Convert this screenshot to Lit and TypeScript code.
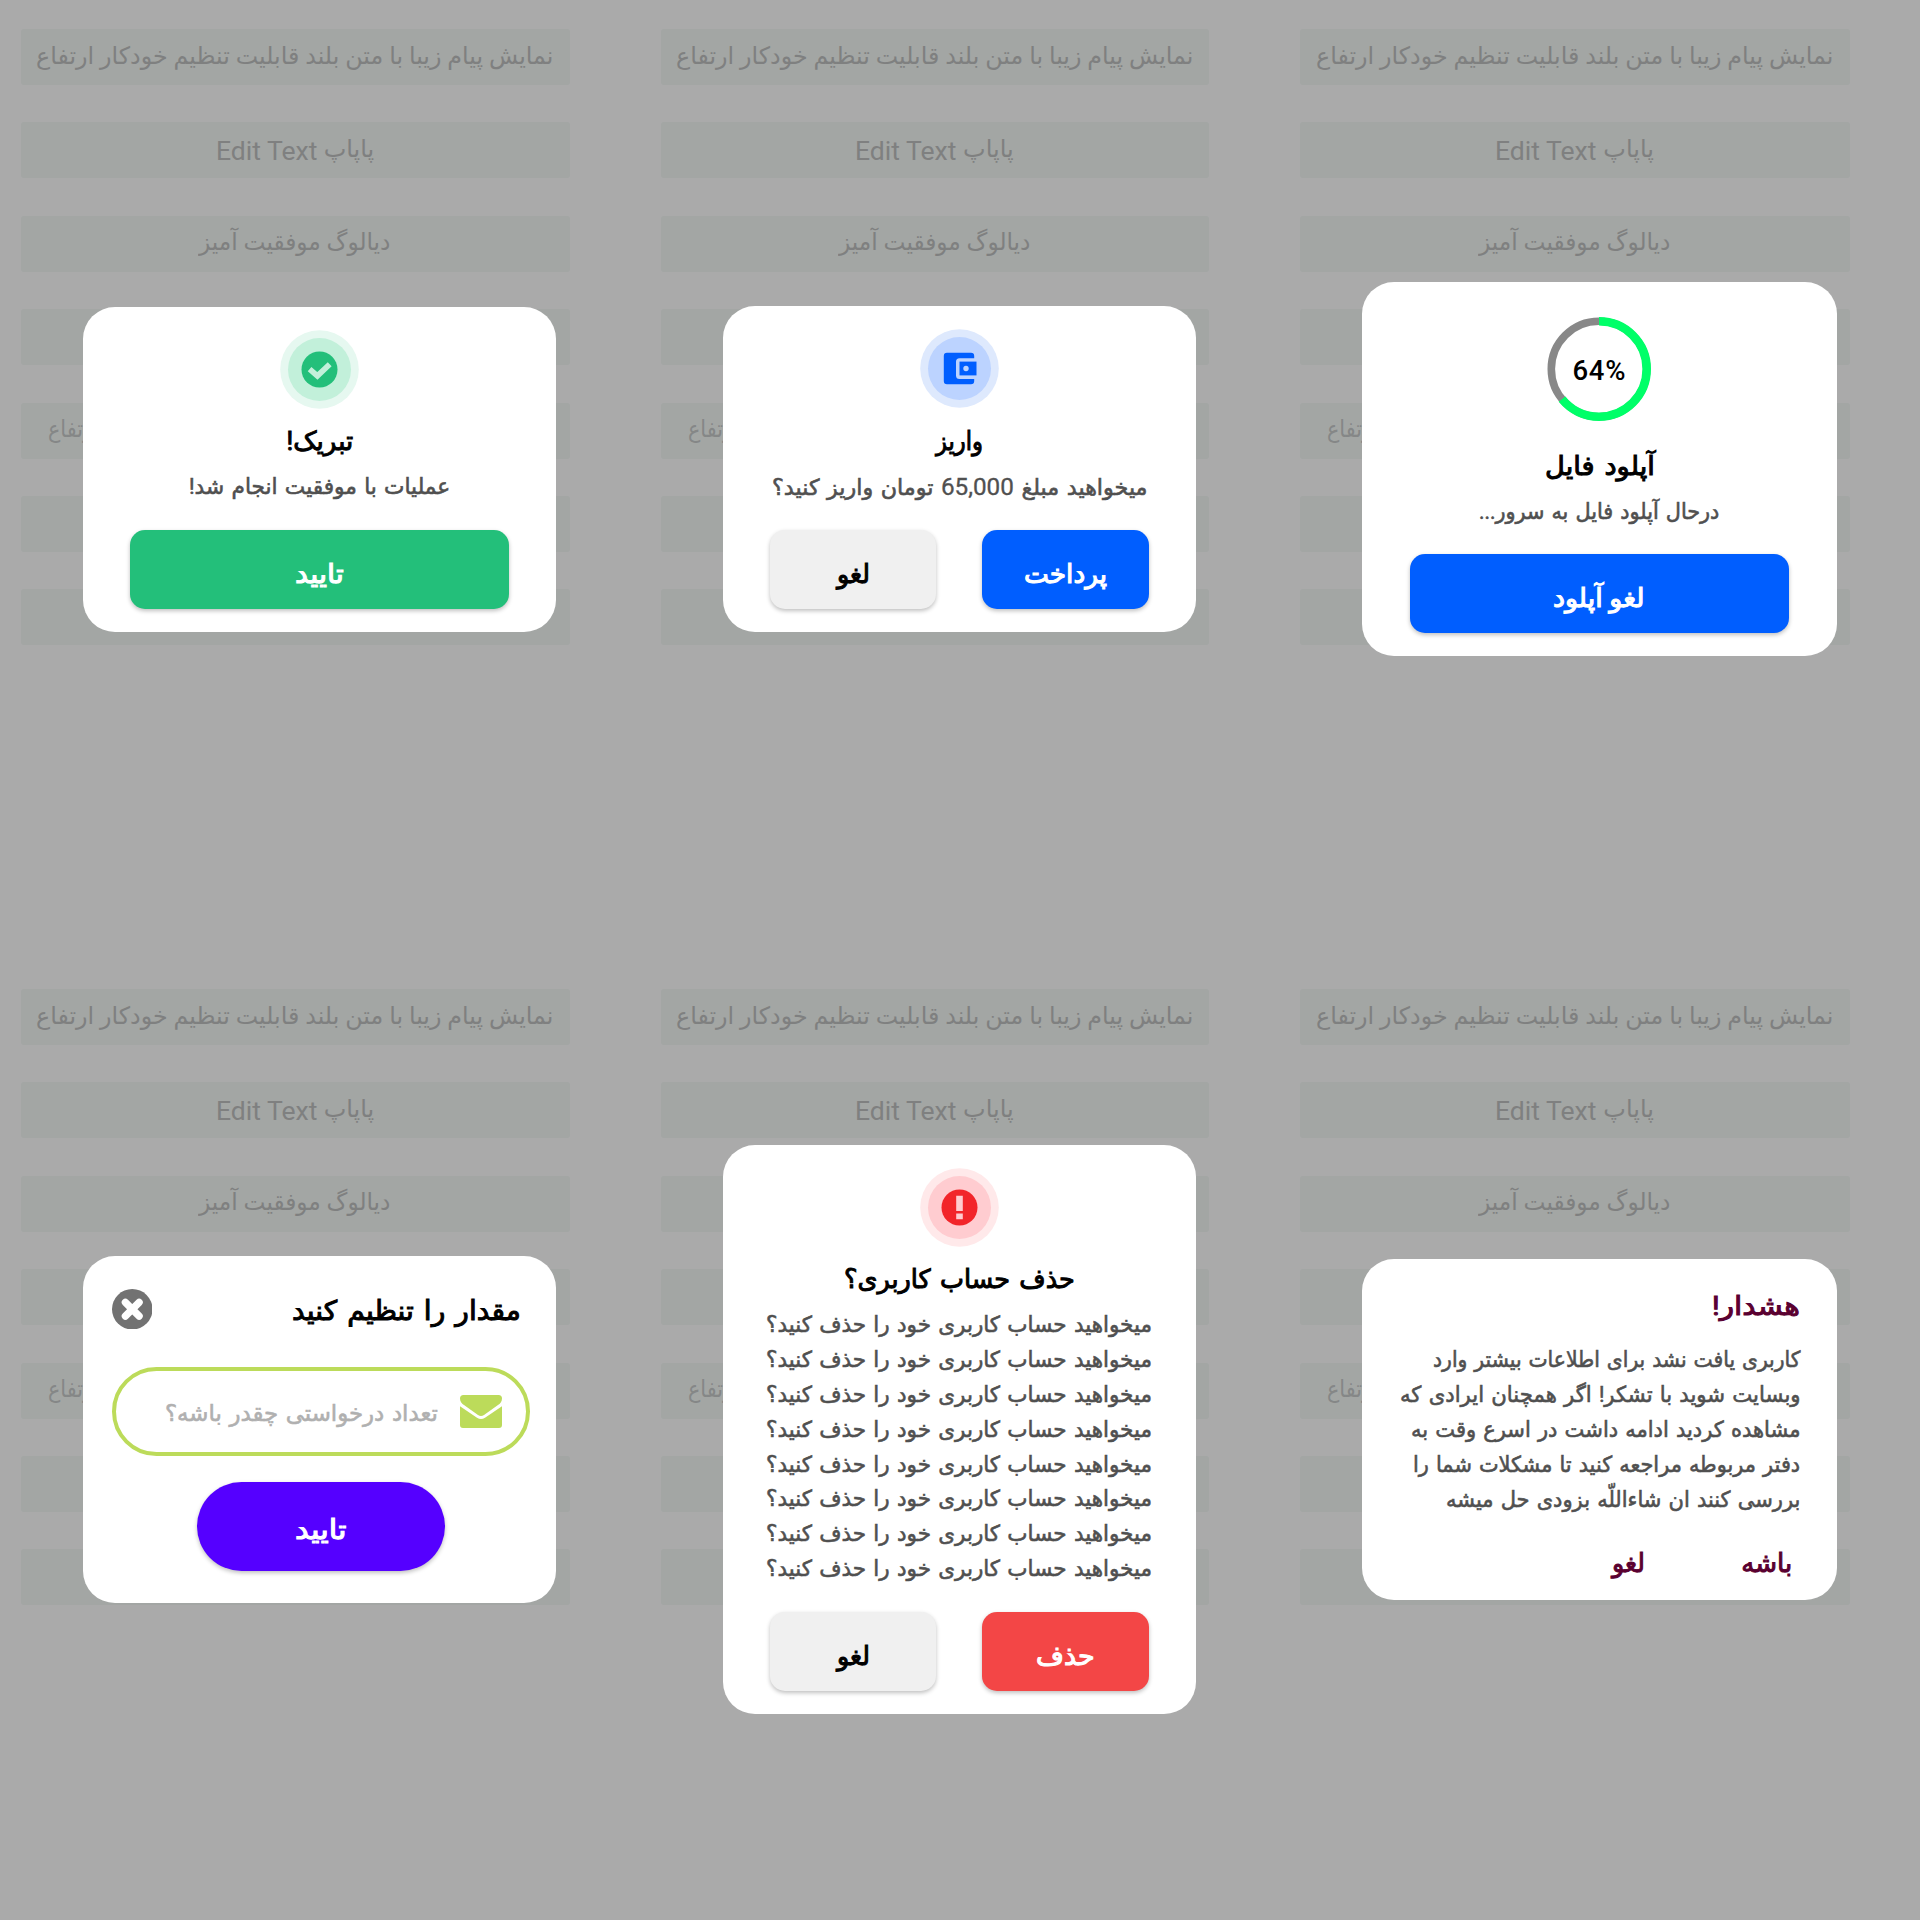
import { LitElement, html, svg, css } from "lit";
import { customElement, property, query, state } from "lit/decorators.js";

// One line of text, condensed or widened so it takes exactly `width` pixels
@customElement("fit-text")
export class FitText extends LitElement {
    @property({ type: Number })
    width: number = 0;

    @state()
    ratio: number = 1;

    @query(".line")
    line!: HTMLElement;

    render() {
        return html`<span class="box" style="width:${this.width}px"><span class="line" style="transform:scaleX(${this.ratio})"><slot></slot></span></span>`;
    }

    firstUpdated() {
        const natural = this.line.offsetWidth;
        if (natural && this.width) {
            this.ratio = this.width / natural;
        }
    }

    static styles = css`
        :host {
            display: block;
            flex: none;
        }

        .box {
            display: block;
        }

        .line {
            display: inline-block;
            vertical-align: top;
            white-space: nowrap;
            transform-origin: right center;
        }
    `;
}

@customElement("dialog-scene")
export class DialogScene extends LitElement {
    render() {
        return html`
            <div class="rows">
                <div class="row"><fit-text width="517">نمایش پیام زیبا با متن بلند قابلیت تنظیم خودکار ارتفاع</fit-text></div>
                <div class="row mixed">
                    <fit-text width="51">پاپاپ</fit-text>
                    <fit-text class="latin" width="101">Edit Text</fit-text>
                </div>
                <div class="row"><fit-text width="191">دیالوگ موفقیت آمیز</fit-text></div>
                <div class="row"></div>
                <div class="row behind"><fit-text width="51">ارتفاع</fit-text></div>
                <div class="row"></div>
                <div class="row"></div>
            </div>
            <div class="stage"><slot></slot></div>
        `;
    }

    static styles = css`
        :host {
            display: grid;
            direction: rtl;
            height: 960px;
            color: #7f8080;
        }

        .rows, .stage {
            grid-area: 1 / 1;
        }

        .rows {
            display: flex;
            flex-direction: column;
            gap: 37.4px;
            padding: 29px 70px 0 21px;
        }

        .row {
            display: flex;
            align-items: center;
            justify-content: center;
            height: 56px;
            border-radius: 3px;
            background: #a3a6a4;
            font-size: 24px;
            line-height: 52px;
        }

        .row fit-text {
            margin-top: -3px;
        }

        .mixed {
            gap: 6px;
        }

        .row .latin {
            margin-top: 2px;
            font-size: 26px;
        }

        /* mostly hidden by the dialog, only the end of the label shows */
        .behind {
            justify-content: flex-end;
            padding-left: 27px;
            color: #858787;
        }

        .stage {
            display: flex;
            z-index: 1;
            align-items: center;
            justify-content: center;
            height: 938.5px;
        }
    `;
}

@customElement("app-root")
export class AppRoot extends LitElement {
    badge(kind: string) {
        const glyphs: Record<string, unknown> = {
            success: svg`
                <circle cx="39.5" cy="39.5" r="18" fill="#23bf7a"/>
                <path d="M29.600 39.200 37.400 45.900 49.700 34.300" fill="none" stroke="#c2f0da" stroke-width="5.6"/>`,
            wallet: svg`
                <path d="M27 23.8h24a3.2 3.2 0 0 1 3.2 3.2v2.2H39.5a3.5 3.5 0 0 0-3.5 3.5v13.8a3.5 3.5 0 0 0 3.5 3.5h14.7v2a3.2 3.2 0 0 1-3.2 3.2H27a3.2 3.2 0 0 1-3.2-3.2V27a3.2 3.2 0 0 1 3.2-3.2z" fill="#005eff"/>
                <path d="M39.5 32.6h17v13.8h-17z" fill="#005eff"/>
                <circle cx="46" cy="39.5" r="2.7" fill="#bcd3ff"/>`,
            danger: svg`
                <circle cx="39.5" cy="39.5" r="18" fill="#f2252a"/>
                <path d="M36.2 27.8h6.6V43h-6.6zM36.2 45.5h6.6v5.8h-6.6z" fill="#ffccd0"/>`,
        };
        return html`
            <svg class="badge ${kind}" viewBox="0 0 79 79">
                <circle class="halo" cx="39.5" cy="39.5" r="39.3"/>
                <circle class="disc" cx="39.5" cy="39.5" r="31.5"/>
                ${glyphs[kind]}
            </svg>
        `;
    }

    ring(percent: number) {
        const length = 2 * Math.PI * 47.7;
        return html`
            <div class="ring">
                <svg viewBox="0 0 104 104">
                    <circle cx="52" cy="52" r="47.7" fill="none" stroke="#888" stroke-width="7.6"/>
                    <circle cx="52" cy="52" r="47.7" fill="none" stroke="#00ff68" stroke-width="8.6"
                        stroke-dasharray="${(length * percent) / 100} ${length}" transform="rotate(-90 52 52)"/>
                </svg>
                <span class="percent" dir="ltr">${percent}%</span>
            </div>
        `;
    }

    render() {
        const warning: [number, string][] = [
            [367, "کاربری یافت نشد برای اطلاعات بیشتر وارد"],
            [401, "وبسایت شوید با تشکر! اگر همچنان ایرادی که"],
            [390, "مشاهده کردید ادامه داشت در اسرع وقت به"],
            [387, "دفتر مربوطه مراجعه کنید تا مشکلات شما را"],
            [354, "بررسی کنند ان شاءاللّه بزودی حل میشه"],
        ];
        return html`
            <dialog-scene>
                <div class="card">
                    ${this.badge("success")}
                    <fit-text class="title" width="67">تبریک!</fit-text>
                    <div class="body"><fit-text width="261">عملیات با موفقیت انجام شد!</fit-text></div>
                    <div class="buttons"><div class="button green"><fit-text width="49">تایید</fit-text></div></div>
                </div>
            </dialog-scene>

            <dialog-scene>
                <div class="card">
                    ${this.badge("wallet")}
                    <fit-text class="title" width="47">واریز</fit-text>
                    <div class="body"><fit-text width="376">میخواهید مبلغ <span class="amount">65,000</span> تومان واریز کنید؟</fit-text></div>
                    <div class="buttons">
                        <div class="button blue"><fit-text width="83">پرداخت</fit-text></div>
                        <div class="button gray"><fit-text width="33">لغو</fit-text></div>
                    </div>
                </div>
            </dialog-scene>

            <dialog-scene>
                <div class="card wide">
                    ${this.ring(64)}
                    <fit-text class="title" width="110">آپلود فایل</fit-text>
                    <div class="body"><fit-text width="240">درحال آپلود فایل به سرور...</fit-text></div>
                    <div class="buttons"><div class="button blue"><fit-text width="91">لغو آپلود</fit-text></div></div>
                </div>
            </dialog-scene>

            <dialog-scene>
                <div class="card form">
                    <div class="head">
                        <fit-text width="229">مقدار را تنظیم کنید</fit-text>
                        <svg class="close" viewBox="0 0 40 40">
                            <circle cx="20" cy="20" r="20" fill="#727272"/>
                            <path d="M13.2 13.2 26.8 26.8M26.8 13.2 13.2 26.8" stroke="#fff" stroke-width="7.2" stroke-linecap="round"/>
                        </svg>
                    </div>
                    <div class="field">
                        <svg class="mail" viewBox="0 0 42 33">
                            <path d="M3.500 0h35A3.500 3.500 0 0 1 42 3.500C42 7 40 8.700 38 10L24 20q-3 2.200-6 0L4 10C2 8.700 0 7 0 3.500A3.500 3.500 0 0 1 3.500 0z" fill="#bcdb5a"/>
                            <path d="M0 11.200 17 22.800q4 2.600 8 0L42 11.200V30a3 3 0 0 1-3 3H3a3 3 0 0 1-3-3z" fill="#bcdb5a"/>
                        </svg>
                        <fit-text class="hint" width="273">تعداد درخواستی چقدر باشه؟</fit-text>
                    </div>
                    <div class="button purple"><fit-text width="52">تایید</fit-text></div>
                </div>
            </dialog-scene>

            <dialog-scene>
                <div class="card">
                    ${this.badge("danger")}
                    <fit-text class="title" width="231">حذف حساب کاربری؟</fit-text>
                    <div class="body">
                        ${Array.from({ length: 8 }, () => html`<fit-text width="386">میخواهید حساب کاربری خود را حذف کنید؟</fit-text>`)}
                    </div>
                    <div class="buttons">
                        <div class="button red"><fit-text width="59">حذف</fit-text></div>
                        <div class="button gray"><fit-text width="33">لغو</fit-text></div>
                    </div>
                </div>
            </dialog-scene>

            <dialog-scene>
                <div class="card wide warning">
                    <fit-text class="title" width="88">هشدار!</fit-text>
                    <div class="body">
                        ${warning.map(([width, text]) => html`<fit-text width=${width}>${text}</fit-text>`)}
                    </div>
                    <div class="actions">
                        <fit-text width="51">باشه</fit-text>
                        <fit-text width="33">لغو</fit-text>
                    </div>
                </div>
            </dialog-scene>
        `;
    }

    static styles = css`
        :host {
            display: grid;
            grid-template-columns: 639.5px 639.3px 641.2px;
            width: 1920px;
            height: 1920px;
            overflow: hidden;
            background: #aaa;
            font-family: Roboto, "DejaVu Sans", sans-serif;
        }

        .card {
            display: flex;
            flex-direction: column;
            align-items: center;
            box-sizing: border-box;
            width: 473px;
            padding: 23px 0;
            border-radius: 32px;
            background: #fff;
            color: #000;
        }

        .wide {
            width: 474.5px;
        }

        .badge {
            width: 79px;
            height: 79px;
        }

        .success .halo { fill: #e6f8f0; }
        .success .disc { fill: #c2f0da; }
        .wallet .halo { fill: #dee9fd; }
        .wallet .disc { fill: #bcd3ff; }
        .danger .halo { fill: #ffe9ea; }
        .danger .disc { fill: #ffccd0; }

        .ring {
            display: grid;
            place-items: center;
            width: 104px;
            height: 104px;
            margin: 12px 0;
        }

        .ring svg, .percent {
            grid-area: 1 / 1;
        }

        .ring svg {
            width: 104px;
            height: 104px;
        }

        .percent {
            padding-top: 3px;
            font-size: 27.5px;
            font-weight: 500;
            letter-spacing: 0.8px;
        }

        .title {
            margin-top: 15.5px;
            font-size: 26px;
            line-height: 34px;
            word-spacing: 3px;
            -webkit-text-stroke: 1px currentColor;
        }

        .body {
            margin-top: 11.8px;
            color: #505050;
            font-size: 22px;
            line-height: 34.9px;
            word-spacing: 2px;
            -webkit-text-stroke: 0.6px currentColor;
        }

        .amount {
            font-size: 24px;
            letter-spacing: 1.2px;
            -webkit-text-stroke: 0.3px currentColor;
        }

        .buttons {
            display: flex;
            gap: 46px;
            box-sizing: border-box;
            width: 379px;
            margin-top: 24.8px;
        }

        .button {
            display: flex;
            flex: 1;
            justify-content: center;
            box-sizing: border-box;
            height: 79px;
            padding-top: 10px;
            border-radius: 15px;
            box-shadow: 0 2px 4px rgba(0, 0, 0, 0.25);
            color: #fff;
            font-size: 26px;
            line-height: 68.7px;
            -webkit-text-stroke: 1.1px currentColor;
        }

        .green { background: #23bf7a; }
        .blue { background: #005eff; }
        .red { background: #f34646; }

        .gray {
            background: #f0f0f0;
            color: #000;
        }

        .form {
            padding: 33px 26.5px 31.5px 28.5px;
        }

        .head {
            display: flex;
            justify-content: space-between;
            align-items: center;
            box-sizing: border-box;
            width: 100%;
            height: 40px;
            padding-right: 9px;
            font-size: 27px;
            line-height: 34px;
            word-spacing: 3px;
            -webkit-text-stroke: 1px currentColor;
        }

        .head fit-text {
            padding-top: 4px;
        }

        .close {
            width: 40.5px;
            height: 40.5px;
        }

        .field {
            display: flex;
            align-items: center;
            gap: 21.5px;
            box-sizing: border-box;
            width: 100%;
            height: 89.5px;
            margin: 37.7px 0 26px;
            padding-right: 24px;
            border: 4.4px solid #bcdb5a;
            border-radius: 45px;
        }

        .mail {
            width: 42px;
            height: 33px;
        }

        .hint {
            padding-top: 6px;
            color: #b0b0b0;
            font-size: 23px;
            line-height: 34px;
            word-spacing: 2px;
            -webkit-text-stroke: 0.6px currentColor;
        }

        .purple {
            flex: none;
            width: 248px;
            height: 89px;
            padding-top: 8px;
            border-radius: 45px;
            background: #5500ff;
            font-size: 27px;
            line-height: 81px;
        }

        .warning {
            align-items: flex-start;
            padding: 30px 36.5px 20px;
        }

        .warning .title {
            margin-top: 0;
            color: #5a0030;
        }

        .warning .body {
            margin-top: 20.5px;
        }

        .actions {
            display: flex;
            gap: 96px;
            margin: 28px 8px 0 0;
            color: #5a0030;
            font-size: 26px;
            line-height: 34px;
            -webkit-text-stroke: 1px currentColor;
        }
    `;
}
